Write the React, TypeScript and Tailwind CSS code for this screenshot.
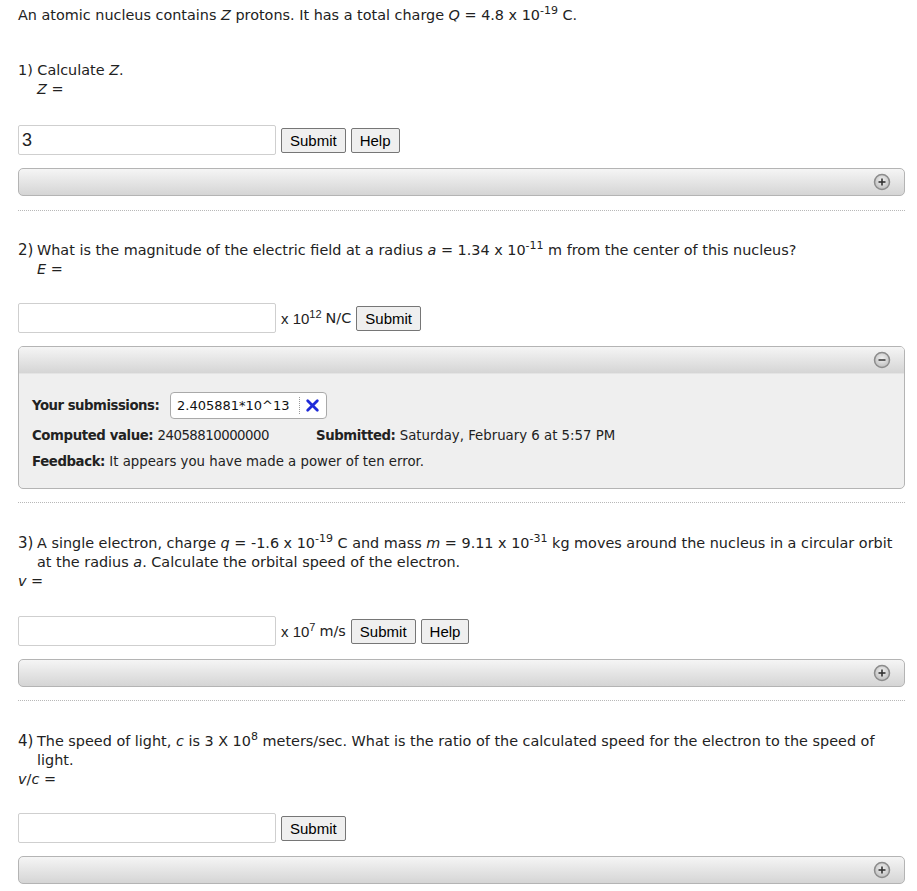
import type { ReactNode } from "react";

const body = "font-['DejaVu_Sans',sans-serif]";
const arial = "font-['Liberation_Sans',Arial,sans-serif]";

function Sup({ children }: { children: ReactNode }) {
  return <sup className="relative -top-[6px] text-[11px]">{children}</sup>;
}

function Btn({ children }: { children: ReactNode }) {
  return (
    <button
      className={`${arial} h-[25px] rounded-[2px] border border-[#767676] bg-[#efefef] px-[8px] text-[15px] leading-none text-black`}
    >
      {children}
    </button>
  );
}

function Field({ value = "" }: { value?: string }) {
  return (
    <input
      readOnly
      value={value}
      className={`${arial} h-[30px] w-[258px] rounded-[2px] border border-[#cfcfcf] bg-white px-[3px] text-[18px] text-[#222] outline-none`}
    />
  );
}

function Toggle({ open }: { open?: boolean }) {
  return (
    <svg width="18" height="18" viewBox="0 0 18 18" className="shrink-0">
      <defs>
        <radialGradient id={open ? "gm" : "gp"} cx="50%" cy="40%" r="60%">
          <stop offset="0%" stopColor="#f2f2f2" />
          <stop offset="100%" stopColor="#bdbdbd" />
        </radialGradient>
      </defs>
      <circle cx="9" cy="9" r="7.5" fill={`url(#${open ? "gm" : "gp"})`} stroke="#8c8c8c" strokeWidth="1.5" />
      <path d="M5.5 9h7" stroke="#333" strokeWidth="1.6" />
      {!open && <path d="M9 5.5v7" stroke="#333" strokeWidth="1.6" />}
    </svg>
  );
}

function Bar() {
  return (
    <div className="mt-[13px] flex h-[28px] items-center justify-end rounded-[5px] border border-[#b4b4b4] bg-linear-to-b from-[#f5f5f5] to-[#d5d5d5] pr-[13px]">
      <Toggle />
    </div>
  );
}

function Rule({ top }: { top: string }) {
  return <div className={`${top} border-t border-dotted border-[#b8b8b8]`} />;
}

function Question({ n, children }: { n: string; children: ReactNode }) {
  return (
    <div className="flex">
      <span className="w-[19px] shrink-0 text-[15px]">{n})</span>
      <span>{children}</span>
    </div>
  );
}

export default function App() {
  return (
    <div className={`${body} w-[917px] bg-white pl-[18px] pr-[12px] pb-[6px] text-[14.4px] leading-[19px] text-[#222]`}>
      <p className="pt-[6px]">
        An atomic nucleus contains <i>Z</i> protons. It has a total charge <i>Q</i> = 4.8 x 10<Sup>-19</Sup> C.
      </p>

      {/* 1 */}
      <div className="mt-[36px]">
        <div>1) Calculate <i>Z</i>.</div>
        <div className="pl-[19px]"><i>Z</i> =</div>
      </div>
      <div className="mt-[26px] flex items-center gap-[5px]">
        <Field value="3" />
        <Btn>Submit</Btn>
        <Btn>Help</Btn>
      </div>
      <Bar />
      <Rule top="mt-[14px]" />

      {/* 2 */}
      <div className="mt-[30px]">
        <Question n="2">
          What is the magnitude of the electric field at a radius <i>a</i> = 1.34 x 10<Sup>-11</Sup> m from the center of this nucleus?
        </Question>
        <div className="pl-[19px]"><i>E</i> =</div>
      </div>
      <div className="mt-[24px] flex items-center">
        <Field />
        <span className={`${arial} ml-[5px] text-[15px]`}>x 10<Sup>12</Sup></span>
        <span className="ml-[4px]">N/C</span>
        <span className="ml-[5px]"><Btn>Submit</Btn></span>
      </div>
      <div className="mt-[13px] overflow-hidden rounded-[5px] border border-[#b4b4b4] bg-[#efefef] text-[13.3px]">
        <div className="flex h-[27px] items-center justify-end border-b border-[#e4e4e4] bg-linear-to-b from-[#f5f5f5] to-[#d5d5d5] pr-[13px]">
          <Toggle open />
        </div>
        <div className="px-[13px] pt-[18px] pb-[17px]">
          <div className="flex items-center">
            <b className="w-[138px] shrink-0 whitespace-nowrap tracking-[-0.5px]">Your submissions:</b>
            <div className="flex h-[27px] w-[157px] shrink-0 items-center rounded-[4px] border border-[#a9a9a9] bg-white pl-[6px]">
              <span className="whitespace-nowrap text-[13px] text-[#111]">2.405881*10^13</span>
              <span className="ml-[9px] h-[17px] shrink-0 border-l border-dotted border-[#999]" />
              <svg width="15" height="15" viewBox="0 0 14 14" className="ml-[5px] shrink-0">
                <path d="M2.5 2.5l9 9M11.5 2.5l-9 9" stroke="#1f2bd8" strokeWidth="2.6" strokeLinecap="round" />
              </svg>
            </div>
          </div>
          <div className="mt-[7px] flex whitespace-nowrap">
            <span className="w-[284px] shrink-0">
              <b className="tracking-[-0.4px]">Computed value:</b>{" "}
              <span className="tracking-[-0.5px]">24058810000000</span>
            </span>
            <span><b className="tracking-[-0.4px]">Submitted:</b> Saturday, February 6 at 5:57 PM</span>
          </div>
          <div className="mt-[7px]"><b className="tracking-[-0.4px]">Feedback:</b> It appears you have made a power of ten error.</div>
        </div>
      </div>
      <Rule top="mt-[13px]" />

      {/* 3 */}
      <div className="mt-[31px]">
        <Question n="3">
          A single electron, charge <i>q</i> = -1.6 x 10<Sup>-19</Sup> C and mass <i>m</i> = 9.11 x 10<Sup>-31</Sup> kg moves around the nucleus in a circular orbit at the radius <i>a</i>. Calculate the orbital speed of the electron.
        </Question>
        <div><i>v</i> =</div>
      </div>
      <div className="mt-[25px] flex items-center">
        <Field />
        <span className={`${arial} ml-[5px] text-[15px]`}>x 10<Sup>7</Sup></span>
        <span className="ml-[4px]">m/s</span>
        <span className="ml-[5px] flex gap-[5px]"><Btn>Submit</Btn><Btn>Help</Btn></span>
      </div>
      <Bar />
      <Rule top="mt-[13px]" />

      {/* 4 */}
      <div className="mt-[31px]">
        <Question n="4">
          The speed of light, <i>c</i> is 3 X 10<Sup>8</Sup> meters/sec. What is the ratio of the calculated speed for the electron to the speed of light.
        </Question>
        <div><i>v</i>/<i>c</i> =</div>
      </div>
      <div className="mt-[24px] flex items-center gap-[5px]">
        <Field />
        <Btn>Submit</Btn>
      </div>
      <Bar />
    </div>
  );
}
